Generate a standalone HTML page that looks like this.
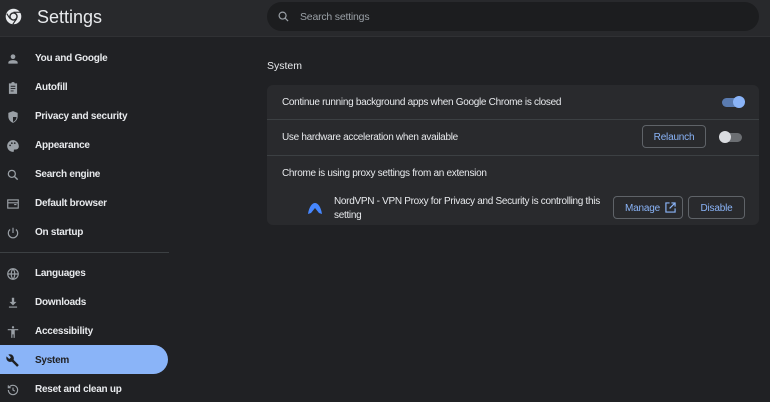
<!DOCTYPE html>
<html><head><style>
*{margin:0;padding:0;box-sizing:border-box}
body{width:770px;height:402px;background:#202124;font-family:"Liberation Sans",sans-serif;color:#e8eaed;position:relative;overflow:hidden}
.hdr{position:absolute;left:0;top:0;width:770px;height:37px;background:#28292c;border-bottom:1px solid #303134}
.title{position:absolute;left:37px;top:7px;font-size:18px;color:#e8eaed}
.search{position:absolute;left:267px;top:2px;width:492px;height:29px;background:#1c1d1f;border-radius:15px}
.search span{position:absolute;left:33px;top:9px;font-size:10.5px;color:#9aa0a6;letter-spacing:-0.2px}
.nav{position:absolute;left:0;font-size:10px;letter-spacing:-0.25px;font-weight:bold;color:#e8eaed;margin-top:1px}
.nav .t{position:absolute;left:35px;white-space:nowrap}
.nav svg{position:absolute;left:6px;top:-1px}
.sel{position:absolute;left:0;top:345px;width:168px;height:29px;background:#8ab4f8;border-radius:0 15px 15px 0}
.sep{position:absolute;left:0;top:252px;width:169px;height:1px;background:#3c4043}
.card{position:absolute;left:267px;top:85px;width:492px;height:140px;background:#292a2d;border-radius:6px}
.row{position:absolute;left:0;width:492px;font-size:10px;letter-spacing:-0.3px;color:#e8eaed;margin-top:1px}
.line{position:absolute;left:0;width:492px;height:1px;background:#3c4043}
.btn{position:absolute;height:23px;border:1px solid #5f6368;border-radius:4px;color:#8ab4f8;font-size:10px;letter-spacing:-0.2px;display:flex;align-items:center;justify-content:center;padding-top:1px}
</style></head><body>
<div class="hdr">
<svg style="position:absolute;left:5px;top:8px" width="17" height="17" viewBox="0 0 24 24"><circle cx="12" cy="12" r="11" fill="#e8eaed"/><circle cx="12" cy="12" r="6" fill="#28292c"/><circle cx="12" cy="12" r="4" fill="#e8eaed"/><path d="M12 6H22.5" stroke="#28292c" stroke-width="1.6"/><path d="M7 15L2.5 8" stroke="#28292c" stroke-width="1.6"/><path d="M16.5 15L11 23" stroke="#28292c" stroke-width="1.6"/></svg>
<div class="title">Settings</div>
<div class="search"><svg style="position:absolute;left:11px;top:9px" width="11" height="11" viewBox="0 0 12 12"><circle cx="5" cy="5" r="3.8" fill="none" stroke="#9aa0a6" stroke-width="1.3"/><path d="M7.8 7.8L11 11" stroke="#9aa0a6" stroke-width="1.3"/></svg><span>Search settings</span></div>
</div>
<div class="sel"></div>
<div class="sep"></div>
<div class="nav" style="top:52px"><svg width="14" height="14" viewBox="0 0 24 24" fill="#9aa0a6"><circle cx="12" cy="8" r="4"/><path d="M4 20v-2c0-3 5-4 8-4s8 1 8 4v2z"/></svg><div class="t">You and Google</div></div>
<div class="nav" style="top:81px"><svg width="14" height="14" viewBox="0 0 24 24" fill="#9aa0a6"><path d="M5 4h4l1-2h4l1 2h4v18H5z"/><path d="M8 9h8M8 13h8M8 17h5" stroke="#202124" stroke-width="1.6"/></svg><div class="t">Autofill</div></div>
<div class="nav" style="top:110px"><svg width="14" height="14" viewBox="0 0 24 24" fill="#9aa0a6"><path d="M12 2L4 5v6c0 5 3.5 9.5 8 11 4.5-1.5 8-6 8-11V5z"/><path d="M12 4v8h6c0 4-3 7.5-6 8.5z" fill="#202124"/></svg><div class="t">Privacy and security</div></div>
<div class="nav" style="top:139px"><svg width="14" height="14" viewBox="0 0 24 24" fill="#9aa0a6"><path d="M12 2a10 10 0 000 20c1.5 0 2-1 1.5-2s0-2 1.5-2h2a5 5 0 005-5c0-6-4.5-11-10-11z"/><circle cx="7" cy="11" r="1.5" fill="#202124"/><circle cx="10" cy="7" r="1.5" fill="#202124"/><circle cx="15" cy="7" r="1.5" fill="#202124"/></svg><div class="t">Appearance</div></div>
<div class="nav" style="top:168px"><svg width="14" height="14" viewBox="0 0 24 24"><circle cx="10" cy="10" r="6" fill="none" stroke="#9aa0a6" stroke-width="2.2"/><path d="M14.5 14.5L20 20" stroke="#9aa0a6" stroke-width="2.4"/></svg><div class="t">Search engine</div></div>
<div class="nav" style="top:197px"><svg width="14" height="14" viewBox="0 0 24 24"><rect x="3" y="5" width="18" height="14" fill="none" stroke="#9aa0a6" stroke-width="2"/><path d="M3 10h18M14 13h4" stroke="#9aa0a6" stroke-width="2"/></svg><div class="t">Default browser</div></div>
<div class="nav" style="top:226px"><svg width="14" height="14" viewBox="0 0 24 24" fill="none" stroke="#9aa0a6" stroke-width="2"><path d="M12 3v9"/><path d="M7 6a8 8 0 1010 0"/></svg><div class="t">On startup</div></div>
<div class="nav" style="top:267px"><svg width="14" height="14" viewBox="0 0 24 24" fill="none" stroke="#9aa0a6" stroke-width="2"><circle cx="12" cy="12" r="9"/><path d="M3 12h18M12 3c-4 5-4 13 0 18M12 3c4 5 4 13 0 18"/></svg><div class="t">Languages</div></div>
<div class="nav" style="top:296px"><svg width="14" height="14" viewBox="0 0 24 24" fill="#9aa0a6"><path d="M10 3h4v7h4l-6 6-6-6h4z"/><rect x="5" y="18" width="14" height="2"/></svg><div class="t">Downloads</div></div>
<div class="nav" style="top:325px"><svg width="14" height="14" viewBox="0 0 24 24" fill="#9aa0a6"><circle cx="12" cy="4" r="2"/><path d="M3 7h18v2h-6v13h-2v-6h-2v6H9V9H3z"/></svg><div class="t">Accessibility</div></div>
<div class="nav" style="top:354px;color:#202124"><svg width="14" height="14" viewBox="0 0 24 24" fill="#202124"><path d="M22 19l-9-9c1-2.5.5-5.5-1.5-7.5C9.5.5 6.5 0 4 1l4.5 4.5-3 3L1 4c-1 2.5-.5 5.5 1.5 7.5 2 2 5 2.5 7.5 1.5l9 9z"/></svg><div class="t">System</div></div>
<div class="nav" style="top:383px"><svg width="14" height="14" viewBox="0 0 24 24" fill="none" stroke="#9aa0a6" stroke-width="2"><path d="M4 12a8 8 0 108-8 8 8 0 00-7 4"/><path d="M4 4v4h4M12 8v4l3 2"/></svg><div class="t">Reset and clean up</div></div>

<div style="position:absolute;left:267px;top:60px;font-size:10.5px;color:#e8eaed">System</div>
<div class="card">
<div class="row" style="top:11px"><span style="position:absolute;left:15px">Continue running background apps when Google Chrome is closed</span></div>
<div style="position:absolute;left:455px;top:13px;width:22px;height:9px;border-radius:5px;background:#5a7bb0"></div>
<div style="position:absolute;left:466px;top:11px;width:12px;height:12px;border-radius:6px;background:#8ab4f8"></div>
<div class="line" style="top:34px"></div>
<div class="row" style="top:46px"><span style="position:absolute;left:15px">Use hardware acceleration when available</span></div>
<div class="btn" style="left:375px;top:40px;width:64px">Relaunch</div>
<div style="position:absolute;left:453px;top:48px;width:22px;height:9px;border-radius:5px;background:#6b6e72"></div>
<div style="position:absolute;left:452px;top:46px;width:12px;height:12px;border-radius:6px;background:#dadce0"></div>
<div class="line" style="top:70px"></div>
<div class="row" style="top:82px"><span style="position:absolute;left:15px">Chrome is using proxy settings from an extension</span></div>
<svg style="position:absolute;left:40px;top:116px" width="16" height="14" viewBox="0 0 16 14"><path d="M1 13C2 6 5 2 8 2s6 4 7 11l-3-1-4-5-4 5z" fill="#4687ff"/></svg>
<div class="row" style="top:109px;line-height:14px"><span style="position:absolute;left:67px;width:290px">NordVPN - VPN Proxy for Privacy and Security is controlling this setting</span></div>
<div class="btn" style="left:346px;top:111px;width:70px;justify-content:flex-start;padding-left:11px">Manage<svg style="position:absolute;left:51px;top:5px" width="11" height="11" viewBox="0 0 12 12" fill="none" stroke="#8ab4f8" stroke-width="1.3"><path d="M5 1H1v10h10V7M7 1h4v4M11 1L5 7"/></svg></div>
<div class="btn" style="left:421px;top:111px;width:57px">Disable</div>
</div>
</body></html>
